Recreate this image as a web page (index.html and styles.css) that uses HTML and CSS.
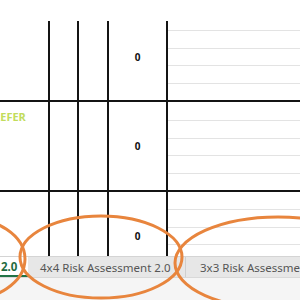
FILE: index.html
```html
<!DOCTYPE html>
<html>
<head>
<meta charset="utf-8">
<link rel="stylesheet" href="styles.css">
</head>
<body>
<div class="screen">
  <div class="sheet">
    <div class="grid">
      <div class="cell"></div>
      <div class="cell"></div>
      <div class="cell"></div>
      <div class="cell zero up"><span>0</span></div>
      <div class="cell lines">
        <div class="sub first r1"></div><div class="sub"></div><div class="sub"></div><div class="sub"></div>
      </div>

      <div class="cell label"><span>REFER</span></div>
      <div class="cell"></div>
      <div class="cell"></div>
      <div class="cell zero"><span>0</span></div>
      <div class="cell lines">
        <div class="sub first r2"></div><div class="sub"></div><div class="sub"></div><div class="sub"></div>
      </div>

      <div class="cell"></div>
      <div class="cell"></div>
      <div class="cell"></div>
      <div class="cell zero"><span>0</span></div>
      <div class="cell lines">
        <div class="sub first r3"></div><div class="sub"></div><div class="sub"></div><div class="sub"></div>
      </div>
    </div>
  </div>
  <div class="tabs">
    <div class="tab active"><span>2.0</span></div>
    <div class="tab t1">4x4 Risk Assessment 2.0</div>
    <div class="tab t2">3x3 Risk Assessment 2.0</div>
  </div>
  <div class="status"></div>
  <svg class="marks" width="300" height="300" viewBox="0 0 300 300">
    <ellipse cx="-38" cy="259" rx="63" ry="42" />
    <ellipse cx="101" cy="257" rx="81" ry="41" />
    <ellipse cx="278" cy="263" rx="103" ry="46" />
  </svg>
</div>
</body>
</html>
```

FILE: styles.css
```css
html, body {
  margin: 0;
  padding: 0;
  background: #fff;
}

.screen {
  position: relative;
  width: 300px;
  height: 300px;
  overflow: hidden;
  font-family: "Liberation Sans", Arial, sans-serif;
}

.sheet {
  height: 256px;
  padding-top: 21px;
  box-sizing: border-box;
  overflow: hidden;
  background: #fff;
}

.grid {
  display: grid;
  grid-template-columns: 48px 27px 28px 57px 1fr;
  grid-template-rows: 79px 88px 88px;
  gap: 2px;
  background: #141414;
}

.cell {
  background: #fff;
}

.zero {
  display: flex;
  align-items: center;
  justify-content: center;
  font-family: "Open Sans", "Liberation Sans", sans-serif;
  font-weight: bold;
  font-size: 10px;
  color: #111;
}

.zero.up {
  padding-bottom: 8px;
  box-sizing: border-box;
}

.label {
  padding-top: 7px;
  overflow: hidden;
  font-family: "Open Sans", "Liberation Sans", sans-serif;
  font-weight: bold;
  font-size: 11px;
  color: #c2dc5c;
  white-space: nowrap;
}

.label span {
  display: block;
  margin-left: -7px;
}

.lines {
  display: flex;
  flex-direction: column;
  overflow: hidden;
}

.sub {
  flex: none;
  height: 16.6px;
  border-bottom: 1px solid #e3e3e3;
}

.first.r1 { height: 9px; }
.first.r2 { height: 18px; }
.first.r3 { height: 17px; }

.tabs {
  display: flex;
  height: 21px;
  background: #e7e7e7;
  border-top: 1px solid #d4d4d4;
  box-sizing: border-box;
  font-family: "Noto Sans", "Open Sans", sans-serif;
  font-size: 11.5px;
  color: #555;
  white-space: nowrap;
}

.tab {
  display: flex;
  align-items: center;
  flex: none;
  overflow: hidden;
}

.active {
  width: 28px;
  background: #fff;
  color: #1f6b41;
  font-weight: bold;
  box-sizing: border-box;
  border-bottom: 2px solid #217346;
  padding-top: 1px;
}

.active span {
  padding-left: 1px;
}

.t1 {
  width: 158px;
  padding-left: 12px;
  box-sizing: border-box;
  border-right: 1px solid #cfcfcf;
}

.t2 {
  padding-left: 14px;
}

.status {
  height: 23px;
  background: #f5f5f5;
  border-top: 1px solid #d9d9d9;
  box-sizing: border-box;
}

.marks {
  position: absolute;
  left: 0;
  top: 0;
  pointer-events: none;
}

.marks ellipse {
  fill: none;
  stroke: #e8853d;
  stroke-width: 3;
}
```
